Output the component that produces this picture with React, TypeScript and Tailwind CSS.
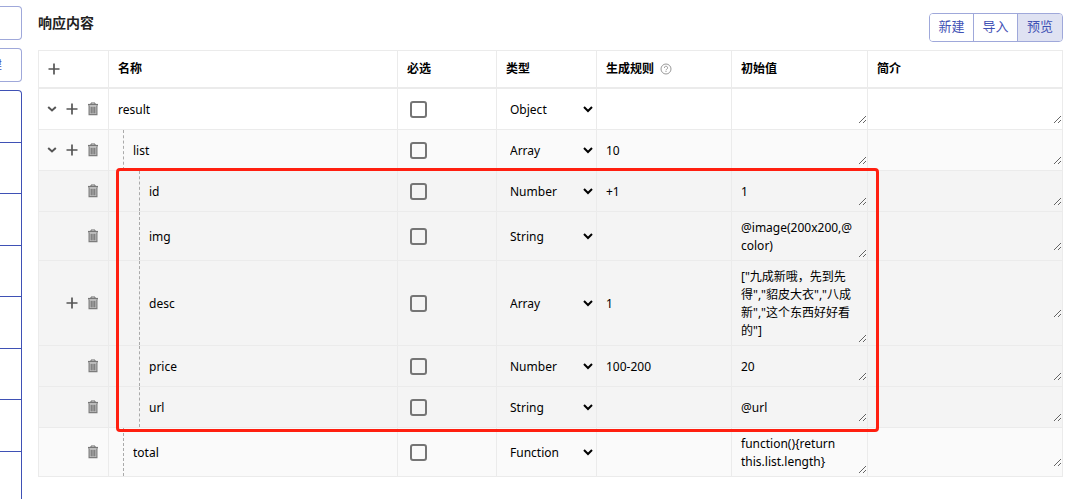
import { useState } from "react";

type Field = {
  name: string;
  depth: 0 | 1 | 2;
  type: string;
  rule: string;
  value: string;
  lines: number;
  expandable?: boolean;
  canAdd?: boolean;
};

const TYPES = ["String", "Number", "Boolean", "Object", "Array", "Function", "RegExp"];

const FIELDS: Field[] = [
  { name: "result", depth: 0, type: "Object", rule: "", value: "", lines: 1, expandable: true, canAdd: true },
  { name: "list", depth: 1, type: "Array", rule: "10", value: "", lines: 1, expandable: true, canAdd: true },
  { name: "id", depth: 2, type: "Number", rule: "+1", value: "1", lines: 1 },
  { name: "img", depth: 2, type: "String", rule: "", value: "@image(200x200,@color)", lines: 2 },
  {
    name: "desc",
    depth: 2,
    type: "Array",
    rule: "1",
    value: '["九成新哦，先到先得","貂皮大衣","八成新","这个东西好好看的"]',
    lines: 4,
    canAdd: true
  },
  { name: "price", depth: 2, type: "Number", rule: "100-200", value: "20", lines: 1 },
  { name: "url", depth: 2, type: "String", rule: "", value: "@url", lines: 1 },
  { name: "total", depth: 1, type: "Function", rule: "", value: "function(){return this.list.length}", lines: 2 }
];

const ROW_BG = ["bg-white", "bg-[#fafafa]", "bg-[#f4f4f4]"];
const INDENT = [
  "pl-[9px]",
  "ml-[14px] border-l border-dashed border-[#aaaaaa] pl-[9px]",
  "ml-[30px] border-l border-dashed border-[#aaaaaa] pl-[9px]"
];

function PlusIcon() {
  return (
    <svg width="12" height="12" viewBox="0 0 12 12" fill="none" stroke="#555" strokeWidth="1.7">
      <path d="M6 .5v11M.5 6h11" />
    </svg>
  );
}

function ChevronIcon() {
  return (
    <svg width="10" height="12" viewBox="0 0 10 12" fill="none" stroke="#555" strokeWidth="2">
      <path d="M1.2 4L5 7.4 8.8 4" />
    </svg>
  );
}

function TrashIcon() {
  return (
    <svg width="12" height="14" viewBox="0 0 12 14" fill="none" stroke="#6b6b6b">
      <path d="M4 2V1h4v1" />
      <path d="M1 2.7h10" stroke="#777" strokeWidth="1.6" />
      <path d="M2.1 3.5v9.1h7.8V3.5" fill="#c4c4c4" stroke="#7c7c7c" strokeWidth="1.2" />
      <path d="M4.2 4.8v6.6M6 4.8v6.6M7.8 4.8v6.6" stroke="#666" />
    </svg>
  );
}

function HelpIcon() {
  return (
    <svg width="12" height="12" viewBox="0 0 12 12" fill="none" stroke="#999">
      <circle cx="6" cy="6" r="5" />
      <path d="M4.4 4.9a1.6 1.6 0 1 1 2.4 1.3c-.5.3-.8.5-.8 1.1M6 8v1" />
    </svg>
  );
}

function GrowingText({ label, text, lines }: { label: string; text: string; lines: number }) {
  return (
    <textarea
      aria-label={label}
      defaultValue={text}
      rows={lines}
      className={`block w-full resize overflow-hidden pr-3 pl-[9px] leading-[18px] ${lines > 1 ? "pt-[5px] pb-[3px]" : "pt-[7px] pb-[5px]"}`}
    />
  );
}

function FieldRow({ field }: { field: Field }) {
  const [required, setRequired] = useState(false);
  const cell = "border-r border-b border-[#ebebeb] p-0 align-middle";

  return (
    <tr className={`h-[41px] ${ROW_BG[field.depth]}`}>
      <td className={cell}>
        <div className="flex items-center justify-end gap-[9px] pr-[9px]">
          {field.expandable && (
            <button type="button" aria-label="收起">
              <ChevronIcon />
            </button>
          )}
          {field.canAdd && (
            <button type="button" aria-label="添加">
              <PlusIcon />
            </button>
          )}
          <button type="button" aria-label="删除">
            <TrashIcon />
          </button>
        </div>
      </td>
      <td className={`${cell} h-px`}>
        <div className={`flex h-full items-center ${INDENT[field.depth]}`}>
          <input aria-label="名称" defaultValue={field.name} className="w-full min-w-0 pt-[2px] outline-none" />
        </div>
      </td>
      <td className={`${cell} pl-3`}>
        <input
          type="checkbox"
          aria-label="必选"
          checked={required}
          onChange={(e) => setRequired(e.target.checked)}
          className="block size-[17px] appearance-none rounded-[3px] border-2 border-[#757575] checked:bg-[#3f51b5]"
        />
      </td>
      <td className={`${cell} pl-[9px]`}>
        <select aria-label="类型" defaultValue={field.type} className="block w-full text-black">
          {TYPES.map((type) => (
            <option key={type}>{type}</option>
          ))}
        </select>
      </td>
      <td className={cell}>
        <input aria-label="生成规则" defaultValue={field.rule} className="block w-full pt-[2px] pl-[9px] outline-none" />
      </td>
      <td className={`${cell} py-[2px]`}>
        <GrowingText label="初始值" text={field.value} lines={field.lines} />
      </td>
      <td className={`${cell} py-[2px]`}>
        <GrowingText label="简介" text="" lines={1} />
      </td>
    </tr>
  );
}

export default function App() {
  const [active, setActive] = useState("预览");
  const head = "border-r border-b-2 border-[#ebebeb] px-[9px] py-0 text-left font-bold";

  return (
    <div className="flex h-screen overflow-hidden bg-white font-['Noto_Sans','Noto_Sans_CJK_SC',sans-serif] text-xs text-black">
      <aside className="flex w-[22px] shrink-0 flex-col gap-2 overflow-hidden pt-[6px]">
        <div className="h-[34px] shrink-0 rounded-r border border-l-0 border-[#9fa8da]" />
        <button
          type="button"
          className="flex h-[34px] shrink-0 items-center justify-end rounded-r border border-l-0 border-[#9fa8da] pr-[19px] whitespace-nowrap text-[#3f51b5]"
        >
          新建
        </button>
        <div className="flex h-[413px] shrink-0 flex-col divide-y divide-[#3f51b5] rounded-tr border border-l-0 border-[#3f51b5]">
          {Array.from({ length: 8 }, (_, i) => (
            <div key={i} className="flex-1" />
          ))}
        </div>
      </aside>

      <main className="min-w-0 flex-1 pr-[7px] pl-4">
        <header className="flex h-[50px] items-start justify-between">
          <h2 className="pt-[13px] text-sm font-bold text-[#222]">响应内容</h2>
          <div className="mt-[13px] flex divide-x divide-[#9fa8da] overflow-hidden rounded border border-[#9fa8da]">
            {["新建", "导入", "预览"].map((label) => (
              <button
                key={label}
                type="button"
                onClick={() => setActive(label)}
                className={`h-[27px] min-w-[44px] px-2 pb-[2px] text-[13px] text-[#3f51b5] ${active === label ? "bg-[#dfe2f2]" : "bg-white"}`}
              >
                {label}
              </button>
            ))}
          </div>
        </header>

        <div className="relative">
          <table className="w-full table-fixed border-separate border-spacing-0 border-t border-l border-[#ebebeb]">
            <colgroup>
              <col className="w-[70px]" />
              <col />
              <col className="w-[99px]" />
              <col className="w-[100px]" />
              <col className="w-[135px]" />
              <col className="w-[136px]" />
              <col className="w-[195px]" />
            </colgroup>
            <thead>
              <tr className="h-[38px]">
                <th className={head}>
                  <button type="button" aria-label="添加" className="block">
                    <PlusIcon />
                  </button>
                </th>
                <th className={head}>名称</th>
                <th className={head}>必选</th>
                <th className={head}>类型</th>
                <th className={head}>
                  <span className="flex items-center gap-[6px]">
                    生成规则
                    <HelpIcon />
                  </span>
                </th>
                <th className={head}>初始值</th>
                <th className={head}>简介</th>
              </tr>
            </thead>
            <tbody>
              {FIELDS.map((field) => (
                <FieldRow key={field.name} field={field} />
              ))}
            </tbody>
          </table>
          <div className="pointer-events-none absolute top-[118px] right-[184px] left-[78px] h-[264px] rounded border-3 border-[#ff1f10]" />
        </div>
      </main>
    </div>
  );
}
